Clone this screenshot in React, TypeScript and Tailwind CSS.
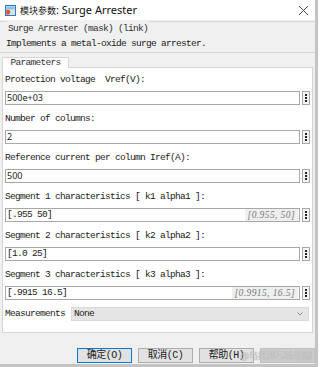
import React from "react";

const mono = "font-['Liberation_Mono','Noto_Sans_CJK_SC',monospace]";

function Dots() {
  return (
    <div className="w-[8px] h-[14px] border border-[#a8a8a8] bg-[#f4f4f4] flex flex-col items-center justify-center gap-[1px]">
      <div className="w-[2px] h-[2px] bg-[#222]" />
      <div className="w-[2px] h-[2px] bg-[#222]" />
      <div className="w-[2px] h-[2px] bg-[#222]" />
    </div>
  );
}

function Field({
  label,
  value,
  hint,
  monoValue,
}: {
  label: string;
  value: string;
  hint?: string;
  monoValue?: boolean;
}) {
  return (
    <div className="flex flex-col mt-[7px] first:mt-0">
      <div className={`${mono} h-[14px] leading-[14px] text-[9.5px] tracking-[-0.7px] text-[#222] whitespace-pre`}>{label}</div>
      <div className="mt-[4px] flex items-center gap-[2px]">
        <div className="flex-1 h-[14px] border border-[#a8a8a8] bg-white flex items-center">
          <div
            className={`flex-1 pl-[1px] ${
              monoValue
                ? `${mono} text-[9.5px] tracking-[-0.7px]`
                : "font-['Noto_Sans',sans-serif] text-[9px]"
            } leading-[12px] text-[#222] whitespace-pre`}
          >
            {value}
          </div>
          {hint && (
            <div className="h-[12px] bg-[#efefef] px-[3px] mr-[1px] flex items-center font-['Liberation_Serif',serif] italic text-[9.5px] tracking-[0.4px] text-[#7a7a7a] whitespace-pre">
              {hint}
            </div>
          )}
        </div>
        <Dots />
      </div>
    </div>
  );
}

function Btn({ children, primary, disabled }: { children?: React.ReactNode; primary?: boolean; disabled?: boolean }) {
  return (
    <div
      className={`w-[55px] h-[15px] flex items-center justify-center ${mono} text-[10px] tracking-[-0.5px] ${
        disabled
          ? "bg-[#cccccc] border border-[#bfbfbf] text-[#8a8a8a]"
          : primary
          ? "bg-[#e1e1e1] border border-[#0078d7] text-[#222]"
          : "bg-[#e1e1e1] border border-[#adadad] text-[#222]"
      }`}
    >
      {children}
    </div>
  );
}

export default function App() {
  return (
    <div className="w-[320px] h-[367px] bg-white flex overflow-hidden">
      <div className="w-[315px] h-[367px] flex flex-col bg-[#f0f0f0] border-b-[3px] border-[#c4c4c4]">
        {/* Title bar */}
        <div className="h-[20px] bg-white flex items-center pl-[5px] pr-[6px] shrink-0">
          <svg width="11" height="11" viewBox="0 0 11 11">
            <rect x="0.5" y="0.5" width="10" height="10" fill="#cfe6f7" stroke="#3a78b5" />
            <rect x="1.5" y="1.5" width="8" height="3" fill="#8cc2ea" />
            <path d="M1.5 4.5 L6 7 L1.5 9.5 Z" fill="#e0522a" />
            <rect x="1.5" y="5" width="3" height="4.5" fill="#e0522a" />
          </svg>
          <div className="ml-[4px] font-['Noto_Sans','Noto_Sans_CJK_SC',sans-serif] text-[11px] leading-[14px] text-[#111] whitespace-pre">
            <span className="text-[9px]">模块参数</span>: Surge Arrester
          </div>
          <div className="flex-1" />
          <svg width="11" height="11" viewBox="0 0 11 11">
            <path d="M1 1 L10 10 M10 1 L1 10" stroke="#444" strokeWidth="1" />
          </svg>
        </div>

        {/* Group box */}
        <div className="mt-[1px] flex flex-col border-b border-[#d6d6d6] h-[32px]">
          <div className="flex items-start">
            <div className="w-[7px] border-t border-[#d6d6d6]" />
            <div className={`${mono} text-[9.5px] tracking-[-0.7px] leading-[12px] mt-[2px] text-[#333] px-[1px] whitespace-pre`}>
              Surge Arrester (mask) (link)
            </div>
            <div className="flex-1 border-t border-[#d6d6d6]" />
          </div>
          <div className={`${mono} text-[9.5px] tracking-[-0.7px] leading-[12px] mt-[3px] pl-[6px] text-[#222] whitespace-pre`}>
            Implements a metal-oxide surge arrester.
          </div>
        </div>

        {/* Tab */}
        <div className="mt-[4px] pl-[2px] flex">
          <div className={`relative z-10 w-[67px] h-[11px] bg-white border-t border-l border-r border-[#d6d6d6] flex items-center justify-center ${mono} text-[9.5px] tracking-[-0.7px] text-[#333]`}>
            Parameters
          </div>
        </div>

        {/* Panel */}
        <div className="mx-[2px] -mt-[1px] h-[266px] bg-white border border-[#d6d6d6] pl-[2px] pr-[2px] pt-[5px] flex flex-col">
          <Field label="Protection voltage  Vref(V):" value="500e+03" />
          <Field label="Number of columns:" value="2" />
          <Field label="Reference current per column Iref(A):" value="500" />
          <Field label="Segment 1 characteristics [ k1 alpha1 ]:" value="[.955 50]" hint="[0.955, 50]" monoValue />
          <Field label="Segment 2 characteristics [ k2 alpha2 ]:" value="[1.0 25]" monoValue />
          <Field label="Segment 3 characteristics [ k3 alpha3 ]:" value="[.9915 16.5]" hint="[0.9915, 16.5]" monoValue />
          <div className="mt-[7px] flex items-center h-[14px]">
            <div className={`${mono} w-[66px] text-[9.5px] tracking-[-0.7px] text-[#222] whitespace-pre`}>Measurements</div>
            <div className="flex-1 h-[14px] bg-[#e5e5e5] border border-[#d9d9d9] flex items-center pl-[2px] pr-[5px] mr-[1px]">
              <div className={`${mono} flex-1 text-[9.5px] tracking-[-0.7px] text-[#222]`}>None</div>
              <svg width="6" height="4" viewBox="0 0 6 4">
                <path d="M0.5 0.5 L3 3 L5.5 0.5" fill="none" stroke="#777" strokeWidth="0.8" />
              </svg>
            </div>
          </div>
        </div>

        {/* Buttons */}
        <div className="mt-[15px] flex justify-end gap-[6px]">
          <Btn primary>确定(O)</Btn>
          <Btn>取消(C)</Btn>
          <Btn>帮助(H)</Btn>
          <div className="relative">
            <Btn disabled />
            <div className="absolute right-[3px] top-[0px] whitespace-nowrap font-['Noto_Sans_CJK_SC',sans-serif] text-[9px] leading-[15px] text-[#d6d6d6] [text-shadow:0_0_1px_#8a8a8a]">
              @乌托邦与敏捷图
            </div>
          </div>
        </div>
      </div>
      <div className="w-[3px] h-[367px] bg-[#c4c4c4]" />
      <div className="flex-1 bg-white" />
    </div>
  );
}
